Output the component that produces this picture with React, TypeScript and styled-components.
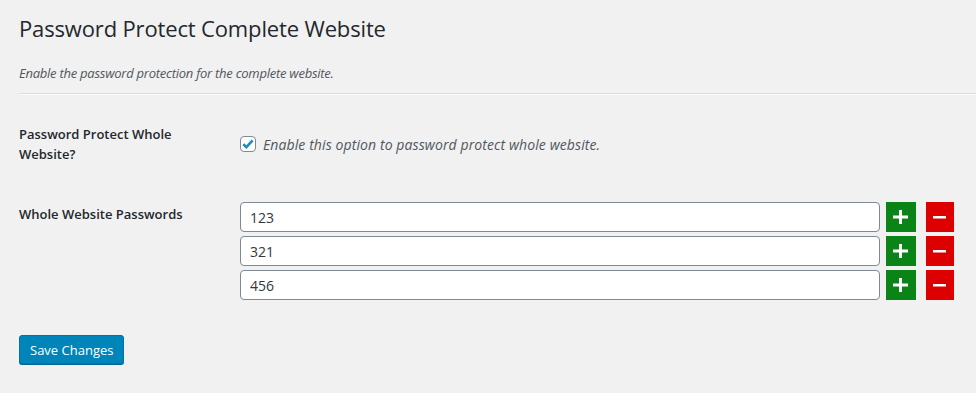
import styled, { createGlobalStyle } from "styled-components"

const GlobalStyle = createGlobalStyle`
  html, body {
    margin: 0;
    background: #f1f1f1;
  }
  body {
    font-family: "Open Sans", "Noto Sans", sans-serif;
    color: #23282d;
    font-size: 13px;
  }
`

const passwords = ["123", "321", "456"]

export default function App() {
  return (
    <>
      <GlobalStyle />
      <Wrap>
        <Title>Password Protect Complete Website</Title>
        <Description>Enable the password protection for the complete website.</Description>
        <Rule />
        <FormTable>
          <Row>
            <Th>Password Protect Whole Website?</Th>
            <Td $top={24}>
              <CheckLine>
                <CheckBox>
                  <svg width="14" height="14" viewBox="0 0 14 14">
                    <path
                      d="M2.3 7.2 L5.4 10.2 L11.6 3.4"
                      fill="none"
                      stroke="#1e8cbe"
                      strokeWidth="2.6"
                    />
                  </svg>
                </CheckBox>
                <Hint>Enable this option to password protect whole website.</Hint>
              </CheckLine>
            </Td>
          </Row>
          <Row>
            <Th>Whole Website Passwords</Th>
            <Td $top={12}>
              <PasswordList>
                {passwords.map(p => (
                  <PasswordRow key={p}>
                    <TextInput defaultValue={p} />
                    <IconButton $color="#0a8417" aria-label="Add password">
                      <svg width="16" height="14" viewBox="0 0 16 14">
                        <rect x="0" y="5.5" width="15" height="3" fill="#fff" />
                        <rect x="6" y="0" width="3" height="14" fill="#fff" />
                      </svg>
                    </IconButton>
                    <IconButton $color="#dd0000" $width={28} aria-label="Remove password">
                      <svg width="14" height="3" viewBox="0 0 14 3">
                        <rect x="0" y="0" width="13" height="2.5" fill="#fff" />
                      </svg>
                    </IconButton>
                  </PasswordRow>
                ))}
              </PasswordList>
            </Td>
          </Row>
        </FormTable>
        <SaveButton>Save Changes</SaveButton>
      </Wrap>
    </>
  )
}

const Wrap = styled.div`
    padding: 14px 0 29px 19px;
  `,
  Title = styled.h1`
    margin: 0;
    font-size: 22px;
    font-weight: 400;
    letter-spacing: -0.15px;
    line-height: 29px;
    color: #23282d;
  `,
  Description = styled.p`
    margin: 20px 0 0;
    font-size: 13px;
    font-style: italic;
    letter-spacing: -0.25px;
    line-height: 20px;
    color: #50575e;
  `,
  Rule = styled.hr`
    margin: 10px 0 0;
    border: 0;
    border-top: 1px solid #dddddd;
    border-bottom: 1px solid #fafafa;
    height: 0;
  `,
  FormTable = styled.div`
    display: flex;
    flex-direction: column;
    gap: 12px;
    padding-top: 15px;
  `,
  Row = styled.div`
    display: grid;
    grid-template-columns: 221px 1fr;
    align-items: start;
  `,
  Th = styled.div`
    padding: 14px 20px 14px 0;
    font-size: 13px;
    font-weight: 600;
    line-height: 20px;
    color: #23282d;
  `,
  Td = styled.div<{ $top: number }>`
    padding-top: ${p => p.$top}px;
  `,
  CheckLine = styled.label`
    display: flex;
    align-items: center;
    gap: 7px;
    height: 20px;
  `,
  CheckBox = styled.span`
    display: flex;
    align-items: center;
    justify-content: center;
    box-sizing: border-box;
    width: 16px;
    height: 16px;
    border: 1px solid #7e8993;
    border-radius: 4px;
    background: #fff;
  `,
  Hint = styled.span`
    font-size: 14px;
    font-style: italic;
    letter-spacing: 0.1px;
    color: #50575e;
  `,
  PasswordList = styled.div`
    display: flex;
    flex-direction: column;
    gap: 4px;
  `,
  PasswordRow = styled.div`
    display: flex;
    align-items: center;
  `,
  TextInput = styled.input`
    box-sizing: border-box;
    width: 640px;
    height: 30px;
    padding: 0 9px;
    border: 1px solid #7e8993;
    border-radius: 4px;
    background: #fff;
    font-family: "Open Sans", "Noto Sans", sans-serif;
    font-size: 14px;
    color: #32373c;
    outline: none;
  `,
  IconButton = styled.button<{ $color: string; $width?: number }>`
    display: flex;
    align-items: center;
    justify-content: center;
    width: ${p => p.$width ?? 30}px;
    height: 30px;
    margin-left: 6px;
    padding: 0;
    border: 0;
    background: ${p => p.$color};
    cursor: pointer;

    & + & {
      margin-left: 10px;
    }
  `,
  SaveButton = styled.button`
    display: block;
    box-sizing: border-box;
    margin-top: 35px;
    height: 29px;
    padding: 0 10px;
    border: 1px solid #0073aa;
    border-radius: 3px;
    background: #0085ba;
    box-shadow: 0 1px 0 #006799;
    color: #fff;
    font-family: "Open Sans", "Noto Sans", sans-serif;
    font-size: 13px;
    line-height: 26px;
    cursor: pointer;
  `
